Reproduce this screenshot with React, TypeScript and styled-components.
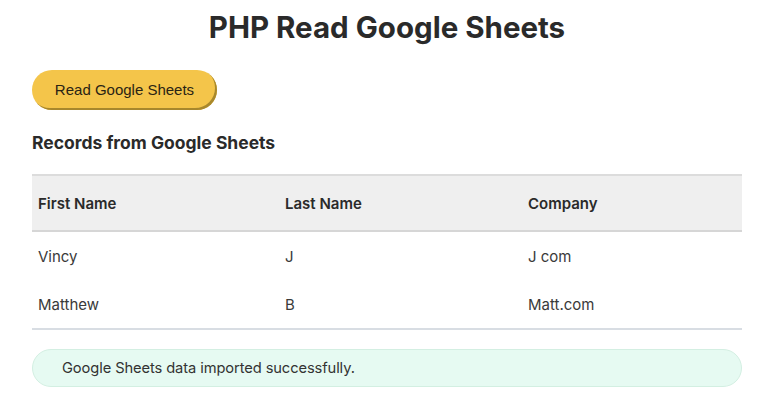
import { createGlobalStyle } from "styled-components";
import styled from "styled-components";

const GlobalStyle = createGlobalStyle`
  body {
    margin: 0;
    background: #fff;
    font-family: Inter, "Noto Sans", sans-serif;
    color: #2b2b2b;
  }
`;

const Page = styled.div`
  width: 710px;
  margin-left: 32px;
  padding-top: 9px;
`;

const Heading = styled.h1`
  margin: 0;
  text-align: center;
  font-size: 29.5px;
  font-weight: 700;
  color: #2a2a2a;
  line-height: 36px;
`;

const ReadButton = styled.button`
  margin-top: 25px;
  width: 185px;
  height: 40px;
  border: none;
  border-radius: 20px;
  background: #f4c54a;
  box-shadow: inset -2px -2px 0 #a8882c;
  font-family: "Liberation Sans", Arial, sans-serif;
  font-size: 15px;
  color: #2a2414;
  padding: 0 0 2px;
  cursor: pointer;
`;

const SubHeading = styled.h2`
  margin: 22px 0 0;
  font-size: 17.5px;
  font-weight: 700;
  line-height: 22px;
  color: #2a2a2a;
`;

const Table = styled.table`
  margin-top: 20px;
  width: 100%;
  table-layout: fixed;
  border-collapse: collapse;
  font-size: 15px;
  border-bottom: 2px solid #d8dde3;
`;

const HeadRow = styled.tr`
  background: #efefef;
  border-top: 2px solid #dcdcdc;
  border-bottom: 2px solid #d6d6d6;
`;

const Th = styled.th<{ $w: number }>`
  box-sizing: border-box;
  width: ${(p) => p.$w}px;
  text-align: left;
  font-weight: 600;
  height: 56px;
  padding: 0 6px;
  color: #2a2a2a;
`;

const Td = styled.td`
  height: 48px;
  padding: 0 6px;
  color: #3a3a3a;
  font-weight: 400;
`;

const Success = styled.div`
  margin-top: 19px;
  height: 38px;
  border-radius: 19px;
  background: #e6faf2;
  border: 1px solid #d3efe2;
  box-sizing: border-box;
  display: flex;
  align-items: center;
  padding-left: 29px;
  font-size: 14.7px;
  letter-spacing: -0.1px;
  color: #333;
`;

const rows = [
  { first: "Vincy", last: "J", company: "J com" },
  { first: "Matthew", last: "B", company: "Matt.com" },
];

export default function App() {
  return (
    <>
      <GlobalStyle />
      <Page>
        <Heading>PHP Read Google Sheets</Heading>
        <ReadButton>Read Google Sheets</ReadButton>
        <SubHeading>Records from Google Sheets</SubHeading>
        <Table>
          <thead>
            <HeadRow>
              <Th $w={247}>First Name</Th>
              <Th $w={243}>Last Name</Th>
              <Th $w={220}>Company</Th>
            </HeadRow>
          </thead>
          <tbody>
            {rows.map((r) => (
              <tr key={r.first}>
                <Td>{r.first}</Td>
                <Td>{r.last}</Td>
                <Td>{r.company}</Td>
              </tr>
            ))}
          </tbody>
        </Table>
        <Success>Google Sheets data imported successfully.</Success>
      </Page>
    </>
  );
}
